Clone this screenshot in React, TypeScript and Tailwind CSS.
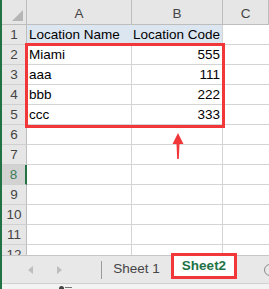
import React from 'react'

const rows: { n: number; a?: string; b?: string }[] = [
  { n: 1, a: 'Location Name', b: 'Location Code' },
  { n: 2, a: 'Miami', b: '555' },
  { n: 3, a: 'aaa', b: '111' },
  { n: 4, a: 'bbb', b: '222' },
  { n: 5, a: 'ccc', b: '333' },
  { n: 6 },
  { n: 7 },
  { n: 8 },
  { n: 9 },
  { n: 10 },
  { n: 11 },
  { n: 12 },
]

function RowHeader({ n }: { n: number }) {
  const selected = n === 8
  return (
    <div
      className={
        selected
          ? 'flex items-center justify-center border-b border-r-2 border-b-[#d0d0d0] border-r-[#217346] bg-[#d2d2d2] leading-[19px] text-[#3d7a5a]'
          : 'flex items-center justify-center border-b border-r border-b-[#d0d0d0] border-r-[#bdbdbd] bg-[#e6e6e6] leading-[19px] text-[#444]'
      }
    >
      {n}
    </div>
  )
}

export default function App() {
  return (
    <div className="relative flex h-[289px] w-[269px] overflow-hidden bg-white font-['Liberation_Sans',sans-serif] text-[13.5px] text-black">
      {/* left green edge */}
      <div className="w-[2px] shrink-0 bg-[#217346]" />

      <div className="flex min-w-0 flex-1 flex-col">
        {/* sheet grid */}
        <div className="grid h-[255px] auto-rows-[20px] grid-cols-[25px_105px_91px_1fr] grid-rows-[25px] content-start overflow-hidden">
          {/* corner */}
          <div className="relative border-b border-r border-[#bdbdbd] bg-[#e6e6e6]">
            <svg className="absolute left-0 top-0" width="24" height="24" viewBox="0 0 24 24">
              <polygon points="21,10 21,21 10,21" fill="#b5b5b5" />
            </svg>
          </div>
          {['A', 'B', 'C'].map((c) => (
            <div
              key={c}
              className="flex items-end justify-center border-b border-r border-[#bdbdbd] bg-[#e6e6e6] leading-[20px] text-[#444]"
            >
              {c}
            </div>
          ))}

          {rows.map((r) => (
            <React.Fragment key={r.n}>
              <RowHeader n={r.n} />
              <div
                className={
                  r.n === 1
                    ? 'flex items-center border-b border-r border-[#dce6f1] bg-[#dce6f1] pl-[2px] leading-[19px] whitespace-nowrap'
                    : 'flex items-center border-b border-r border-[#d4d4d4] pl-[2px] leading-[19px] whitespace-nowrap'
                }
              >
                {r.a}
              </div>
              <div
                className={
                  r.n === 1
                    ? 'flex items-center justify-end border-b border-r border-b-[#d4d4d4] border-r-[#d4d4d4] bg-[#dce6f1] pr-[2px] leading-[19px] whitespace-nowrap'
                    : 'flex items-center justify-end border-b border-r border-[#d4d4d4] pr-[2px] leading-[19px]'
                }
              >
                {r.b}
              </div>
              <div className="border-b border-[#d4d4d4]" />
            </React.Fragment>
          ))}
        </div>

        {/* sheet tabs */}
        <div className="flex h-[28px] items-center border-t border-[#c6c6c6] bg-[#e8e8e8]">
          <svg className="ml-[26px] shrink-0" width="5" height="8" viewBox="0 0 5 8">
            <polygon points="5,0 5,8 0,4" fill="#bdbdbd" />
          </svg>
          <svg className="ml-[24px] shrink-0" width="5" height="8" viewBox="0 0 5 8">
            <polygon points="0,0 0,8 5,4" fill="#bdbdbd" />
          </svg>
          <div className="ml-[39px] h-[18px] w-px shrink-0 bg-[#9a9a9a]" />
          <div className="w-[69px] shrink-0 text-center text-[#444]">Sheet 1</div>
          <div className="-mt-[3px] flex h-[26px] w-[66px] shrink-0 items-center justify-center self-start border-[3px] border-[#f2373b] bg-white font-bold text-[#217346]">
            Sheet2
          </div>
          <div className="ml-[27px] h-[12px] w-[12px] shrink-0 rounded-full border border-[#8a8a8a]" />
        </div>

        {/* status bar */}
        <div className="flex h-[6px] items-end border-t border-[#d0d0d0] bg-[#f3f3f3]">
          <div className="ml-[57px] h-[3px] w-[5px] rounded-t-full bg-[#444]" />
          <div className="mb-[1px] ml-[1px] h-px w-[7px] bg-[#777]" />
        </div>
      </div>

      {/* annotation: red box around data */}
      <div className="absolute left-[25px] top-[43px] h-[85px] w-[200px] border-[3px] border-[#f2373b]" />

      {/* annotation: red arrow */}
      <svg className="absolute left-[172px] top-[133px]" width="12" height="27" viewBox="0 0 12 27">
        <polygon points="6,0 11.5,11 7.5,11 6.8,26 5.2,26 4.5,11 0.5,11" fill="#f2373b" />
      </svg>
    </div>
  )
}
